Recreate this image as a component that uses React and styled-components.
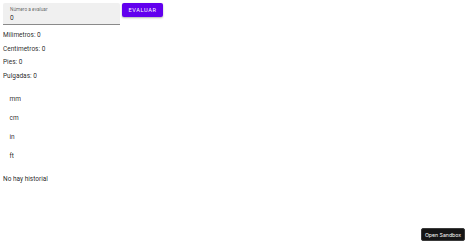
import React from 'react';
import styled, { createGlobalStyle } from 'styled-components';

const Global = createGlobalStyle`
  html, body { margin: 0; padding: 0; background: #fff; }
  body {
    font-family: Roboto, "Liberation Sans", sans-serif;
    color: rgba(0,0,0,0.87);
    -webkit-font-smoothing: antialiased;
  }
`;

const Page = styled.div`
  width: 474px;
  height: 248px;
  position: relative;
  padding: 3px;
  box-sizing: border-box;
`;

const FormRow = styled.div`
  display: flex;
  align-items: flex-start;
  gap: 2px;
`;

const Field = styled.div`
  width: 117px;
  height: 22px;
  background: #f0f0f0;
  border-radius: 2px 2px 0 0;
  border-bottom: 1px solid #8a8a8a;
  box-sizing: border-box;
  padding: 3.5px 7px 0;
  display: flex;
  flex-direction: column;
`;

const FieldLabel = styled.span`
  font-size: 4.8px;
  color: rgba(0,0,0,0.6);
  line-height: 6px;
`;

const FieldValue = styled.span`
  font-size: 6.6px;
  line-height: 10px;
`;

const Button = styled.button`
  height: 14px;
  width: 41px;
  border: none;
  border-radius: 2px;
  background: #6200ee;
  color: #fff;
  font-family: Roboto, "Liberation Sans", sans-serif;
  font-size: 5.6px;
  font-weight: 400;
  letter-spacing: 0.6px;
  padding: 0;
  box-shadow: 0 1px 2px rgba(0,0,0,0.3);
`;

const Results = styled.div`
  margin-top: 4px;
`;

const Result = styled.p`
  margin: 5.8px 0 0;
  font-size: 6.5px;
  line-height: 8px;
`;

const List = styled.ul`
  list-style: none;
  margin: 6px 0 0;
  padding: 3px 0;
`;

const Item = styled.li`
  height: 19.2px;
  display: flex;
  align-items: center;
  padding-left: 6.5px;
  font-size: 6.5px;
`;

const Empty = styled.p`
  margin: 6px 0 0;
  font-size: 6.5px;
  line-height: 8px;
`;

const Sandbox = styled.div`
  position: absolute;
  right: 9px;
  bottom: 7px;
  width: 44px;
  height: 13px;
  background: #151515;
  border: 1px solid #3a3a3a;
  box-sizing: border-box;
  border-radius: 2px;
  color: #fff;
  font-family: Inter, "Liberation Sans", sans-serif;
  font-size: 5.2px;
  display: flex;
  align-items: center;
  justify-content: center;
`;

export default function App() {
  return (
    <>
      <Global />
      <Page>
        <FormRow>
          <Field>
            <FieldLabel>Número a evaluar</FieldLabel>
            <FieldValue>0</FieldValue>
          </Field>
          <Button>EVALUAR</Button>
        </FormRow>
        <Results>
          <Result>Milimetros: 0</Result>
          <Result>Centimetros: 0</Result>
          <Result>Pies: 0</Result>
          <Result>Pulgadas: 0</Result>
        </Results>
        <List>
          {['mm', 'cm', 'in', 'ft'].map((u) => (
            <Item key={u}>{u}</Item>
          ))}
        </List>
        <Empty>No hay historial</Empty>
        <Sandbox>Open Sandbox</Sandbox>
      </Page>
    </>
  );
}
